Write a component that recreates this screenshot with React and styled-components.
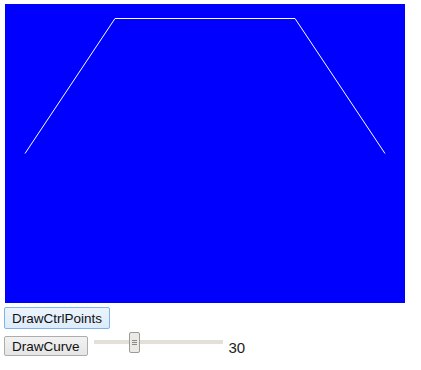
import React, { useState } from "react";
import styled, { createGlobalStyle } from "styled-components";

const GlobalStyle = createGlobalStyle`
  html, body {
    margin: 0;
    padding: 0;
    background: #ffffff;
  }
  body {
    font-family: "Liberation Sans", Arial, sans-serif;
  }
`;

const Page = styled.div`
  display: flex;
  flex-direction: column;
  align-items: flex-start;
  padding: 4px 0 0 5px;
`;

const Canvas = styled.svg`
  display: block;
  width: 400px;
  height: 299px;
  background: #0000ff;
`;

const Row = styled.div`
  display: flex;
  align-items: flex-start;
  margin-top: ${(p) => p.$top}px;
`;

const Button = styled.button`
  height: ${(p) => p.$h || 21}px;
  margin: ${(p) => p.$offset || 0}px 0 0 -1px;
  padding: 0 7px;
  font-family: "Liberation Sans", Arial, sans-serif;
  font-size: 13.5px;
  color: #111;
  border: 1px solid ${(p) => (p.$focused ? "#7eb4ea" : "#adadad")};
  border-radius: 2px;
  background: ${(p) =>
    p.$focused
      ? "linear-gradient(#ecf4fc, #dcecfc)"
      : "linear-gradient(#f2f2f2, #e5e5e5)"};
  cursor: pointer;
  outline: none;
`;

const SliderWrap = styled.div`
  display: flex;
  align-items: center;
  height: 21px;
  margin-left: 6px;
`;

const Slider = styled.input`
  -webkit-appearance: none;
  appearance: none;
  width: 129px;
  height: 21px;
  margin: 0;
  background: transparent;
  outline: none;

  &::-webkit-slider-runnable-track {
    height: 4px;
    background: #e3e0d9;
  }

  &::-webkit-slider-thumb {
    -webkit-appearance: none;
    width: 11px;
    height: 21px;
    margin-top: -8px;
    box-sizing: border-box;
    border: 1px solid #9c9a96;
    border-radius: 2px;
    background:
      linear-gradient(#8c8a86, #8c8a86) center 7px / 5px 1px no-repeat,
      linear-gradient(#8c8a86, #8c8a86) center 9px / 5px 1px no-repeat,
      linear-gradient(#8c8a86, #8c8a86) center 11px / 5px 1px no-repeat,
      #eceae6;
  }
`;

const Value = styled.span`
  margin: 8px 0 0 6px;
  font-size: 15px;
  color: #222;
`;

export default function App() {
  const [value, setValue] = useState(30);

  return (
    <Page>
      <GlobalStyle />
      <Canvas viewBox="0 0 400 299">
        <polyline
          points="20,149.5 110,14.5 290,14.5 380,149.5"
          fill="none"
          stroke="#ffffff"
          strokeWidth="1"
        />
      </Canvas>
      <Row $top={4}>
        <Button $focused $h={22}>DrawCtrlPoints</Button>
      </Row>
      <Row $top={2}>
        <Button $offset={5} $h={20}>DrawCurve</Button>
        <SliderWrap>
          <Slider
            type="range"
            min="0"
            max="100"
            value={value}
            onChange={(e) => setValue(Number(e.target.value))}
          />
        </SliderWrap>
        <Value>{value}</Value>
      </Row>
    </Page>
  );
}
